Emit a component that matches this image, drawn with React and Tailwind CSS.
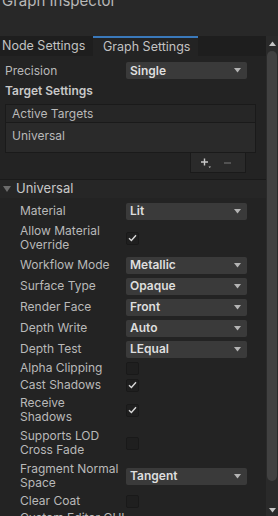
import React from "react";

const font = { fontFamily: "Inter, 'Noto Sans', sans-serif" };

function Arrow() {
  return (
    <svg width="7" height="5" viewBox="0 0 7 5" className="shrink-0">
      <path d="M0 0 L7 0 L3.5 4.5 Z" fill="#b4b4b4" />
    </svg>
  );
}

function Dropdown({ value }) {
  return (
    <div className="flex h-[17px] w-[121px] items-center justify-between rounded-[2px] bg-[#3a3a3a] pl-[4px] pr-[6px]">
      <span className="text-[12px] font-semibold leading-none text-[#dedede]">{value}</span>
      <Arrow />
    </div>
  );
}

function Checkbox({ checked }) {
  return (
    <div className="flex h-[13px] w-[13px] items-center justify-center rounded-[2px] border border-[#191919] bg-[#1f1f1f]">
      {checked && (
        <svg width="9" height="8" viewBox="0 0 9 8">
          <path d="M1 4.2 L3.4 6.4 L8 1.2" fill="none" stroke="#d8d8d8" strokeWidth="1.4" />
        </svg>
      )}
    </div>
  );
}

function Row({ label, height, children }) {
  return (
    <div className={`flex items-center ${height}`}>
      <div className="w-[126px] shrink-0 whitespace-nowrap pl-[20px] text-[12px] leading-[14px] text-[#b9b9b9]">
        {label}
      </div>
      {children}
    </div>
  );
}

const properties = [
  { label: "Material", type: "drop", value: "Lit" },
  { label: ["Allow Material", "Override"], type: "check", checked: true },
  { label: "Workflow Mode", type: "drop", value: "Metallic" },
  { label: "Surface Type", type: "drop", value: "Opaque" },
  { label: "Render Face", type: "drop", value: "Front" },
  { label: "Depth Write", type: "drop", value: "Auto" },
  { label: "Depth Test", type: "drop", value: "LEqual" },
  { label: "Alpha Clipping", type: "check", checked: false },
  { label: "Cast Shadows", type: "check", checked: true },
  { label: ["Receive", "Shadows"], type: "check", checked: true },
  { label: ["Supports LOD", "Cross Fade"], type: "check", checked: false },
  { label: ["Fragment Normal", "Space"], type: "drop", value: "Tangent" },
  { label: "Clear Coat", type: "check", checked: false },
  { label: "Custom Editor GUI", type: "none" },
];

export default function App() {
  return (
    <div className="h-[516px] w-[278px] overflow-hidden bg-[#232323]" style={font}>
      {/* Window title */}
      <div className="h-[36px] overflow-hidden bg-[#282828]">
        <div className="-translate-y-[8px] pl-[2px] text-[15px] leading-[18px] text-[#b8b8b8]">Graph Inspector</div>
      </div>

      <div className="flex h-[480px]">
        <div className="flex w-[266px] flex-col">
          {/* Tabs */}
          <div className="flex h-[20px] bg-[#1e1e1e]">
            <div className="flex w-[93px] items-center pl-[2px] text-[12.5px] text-[#c2c2c2]">Node Settings</div>
            <div className="flex w-[105px] items-center border-t-2 border-[#3a79bb] bg-[#232323] pl-[10px] text-[12.5px] text-[#c2c2c2]">
              Graph Settings
            </div>
          </div>

          {/* Graph settings */}
          <div className="px-[5px] pt-[6px]">
            <div className="flex h-[17px] items-center">
              <span className="w-[121px] text-[12px] text-[#b9b9b9]">Precision</span>
              <Dropdown value="Single" />
            </div>
            <div className="mt-[5px] text-[12px] font-semibold leading-[14px] text-[#c8c8c8]">Target Settings</div>

            <div className="mt-[6px] w-[251px] border border-[#1a1a1a]">
              <div className="flex h-[18px] items-center border-b border-[#1a1a1a] bg-[#262626] pl-[6px] text-[12px] text-[#b9b9b9]">
                Active Targets
              </div>
              <div className="flex h-[29px] items-start bg-[#2a2a2a] pl-[6px] pt-[4px] text-[12px] text-[#b9b9b9]">Universal</div>
            </div>
            <div className="ml-[185px] flex h-[20px] w-[56px] items-center gap-[13px] border-x border-b border-[#1a1a1a] bg-[#2a2a2a] pl-[10px]">
              <svg width="10" height="10" viewBox="0 0 10 10">
                <path d="M3.5 0.5 V7.5 M0 4 H7" stroke="#c8c8c8" strokeWidth="1.4" />
                <path d="M7.5 8.5 L10 8.5 L8.75 10 Z" fill="#c8c8c8" />
              </svg>
              <svg width="8" height="2" viewBox="0 0 8 2">
                <path d="M0 1 H7" stroke="#6e6e6e" strokeWidth="1.2" />
              </svg>
            </div>
          </div>

          {/* Universal foldout */}
          <div className="mt-[6px] flex h-[19px] items-center border-t border-[#1a1a1a] bg-[#262626] pl-[3px]">
            <svg width="8" height="6" viewBox="0 0 8 6">
              <path d="M0 0 L8 0 L4 6 Z" fill="#6c6c6c" />
            </svg>
            <span className="ml-[5px] text-[13px] text-[#c8c8c8]">Universal</span>
          </div>

          <div className="flex flex-col gap-[3px] pt-[4px]">
            {properties.map((p, i) => {
              const two = Array.isArray(p.label);
              const h = two ? "h-[30px]" : p.type === "drop" ? "h-[18px]" : "h-[14px]";
              const label = two ? (
                <>
                  {p.label[0]}
                  <br />
                  {p.label[1]}
                </>
              ) : (
                p.label
              );
              return (
                <Row key={i} label={label} height={h}>
                  {p.type === "drop" && <Dropdown value={p.value} />}
                  {p.type === "check" && <Checkbox checked={p.checked} />}
                </Row>
              );
            })}
          </div>
        </div>

        {/* Scrollbar */}
        <div className="flex w-[12px] flex-col items-center bg-[#2a2a2a] pt-[5px]">
          <svg width="7" height="5" viewBox="0 0 7 5">
            <path d="M0 5 L7 5 L3.5 0.5 Z" fill="#c4c4c4" />
          </svg>
          <div className="mt-[5px] h-[430px] w-[10px] rounded-[5px] bg-[#414141]" />
          <div className="flex-1" />
          <svg width="7" height="5" viewBox="0 0 7 5" className="mb-[3px]">
            <path d="M0 0 L7 0 L3.5 4.5 Z" fill="#c4c4c4" />
          </svg>
        </div>
      </div>
    </div>
  );
}
